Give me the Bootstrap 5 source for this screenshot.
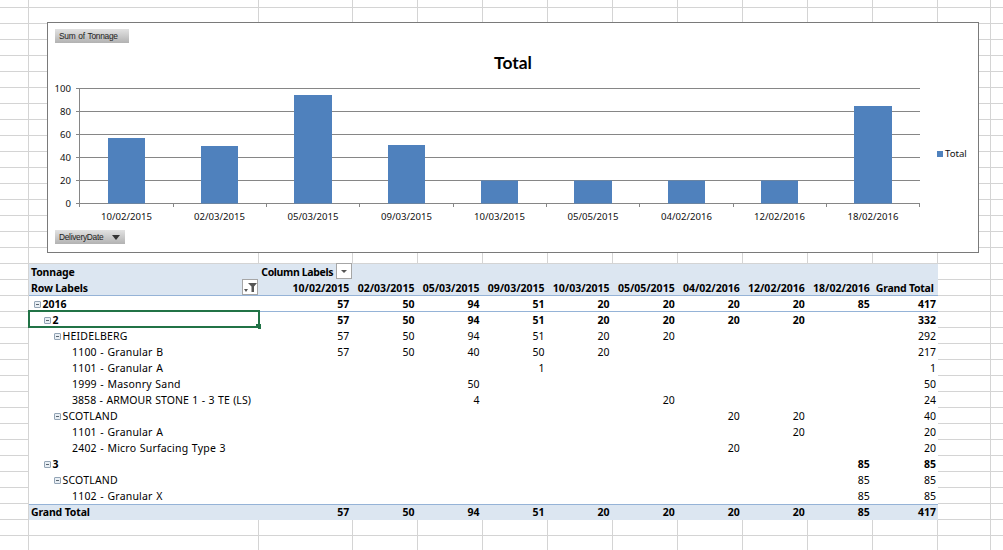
<!DOCTYPE html>
<html lang="en">
<head>
<meta charset="utf-8">
<title>Pivot chart</title>
<link href="https://cdn.jsdelivr.net/npm/bootstrap@5.3.0/dist/css/bootstrap.min.css" rel="stylesheet">
<style>
html,body{height:100%;margin:0;overflow:hidden;background:#fff}
.sheet{
  --gl:#d4d4d4;
  width:1003px;height:550px;overflow:hidden;color:#000;
  font-family:"Noto Sans","Liberation Sans",sans-serif;
  background-color:#fff;
  background-image:
    linear-gradient(var(--gl),var(--gl)),linear-gradient(var(--gl),var(--gl)),
    linear-gradient(var(--gl),var(--gl)),linear-gradient(var(--gl),var(--gl)),
    linear-gradient(var(--gl),var(--gl)),linear-gradient(var(--gl),var(--gl)),
    linear-gradient(var(--gl),var(--gl)),linear-gradient(var(--gl),var(--gl)),
    linear-gradient(var(--gl),var(--gl)),linear-gradient(var(--gl),var(--gl)),
    linear-gradient(var(--gl),var(--gl)),linear-gradient(var(--gl),var(--gl)),
    linear-gradient(var(--gl),var(--gl)),
    repeating-linear-gradient(180deg,var(--gl) 0,var(--gl) 1px,transparent 1px,transparent 16px);
  background-size:1px 100%,1px 100%,1px 100%,1px 100%,1px 100%,1px 100%,1px 100%,1px 100%,1px 100%,1px 100%,1px 100%,1px 100%,1px 100%,100% 100%;
  background-position:28px 0,258px 0,352px 0,417px 0,482px 0,547px 0,612px 0,677px 0,742px 0,807px 0,872px 0,937px 0,990px 0,0 7px;
  background-repeat:no-repeat;
  padding-top:22px;
}
.chartbox{position:relative;width:932px;height:231px;margin-left:47px;background:#fff;border:1px solid #7a7a7a}
.chartbox svg{display:block;width:930px;height:229px}
.chartbox text{font-family:"Noto Sans","Liberation Sans",sans-serif;font-size:9.6px;fill:#111}
.chartbox .ctitle{font-family:"Lato","Liberation Sans",sans-serif;font-size:17.4px;font-weight:700;fill:#000}
.fieldbtn{position:absolute;left:7px;display:flex;align-items:center;justify-content:space-between;height:14px;padding:0 0 0 4px;border:0;border-radius:0;
  background:linear-gradient(#e2e2e2,#b2b2b2);color:#222;font:8.4px/14px "Liberation Sans",sans-serif;letter-spacing:-.3px;word-spacing:1px}
.fb-sum{top:6px;width:74px}
.fb-date{top:207px;width:70px;padding-right:5px}
.fb-date i{width:0;height:0;border:4px solid transparent;border-top:5px solid #333;border-bottom:0}
.pivotwrap{margin:11px 0 0 29px;width:909px;position:relative}
.pivot{table-layout:fixed;width:909px;margin:0;border-collapse:collapse;--bs-table-bg:#fff;--bs-table-color:#000;font-size:10.5px}
.pivot td,.pivot th{height:16px;padding:0 3px 0 2px;line-height:16px;border:0;white-space:nowrap;text-align:right;font-weight:400;box-shadow:none;background:#fff;color:#000;overflow:visible}
.pivot tr>td:last-child{padding-right:2px}
.pivot .lbl{text-align:left;position:relative;letter-spacing:.2px;word-spacing:.6px}
.pivot tr.hdr>*{background:#dce6f1;font-weight:700}
.pivot tr.strong>*{font-weight:700}
.pivot tr.hdr>.lbl{letter-spacing:-.15px;word-spacing:0}
.pivot tr.strong>.lbl{letter-spacing:0;word-spacing:0}
.pivot tr.rule-b>*{box-shadow:inset 0 -1px 0 #95b3d7}
.pivot tr.rule-t>*{box-shadow:inset 0 1px 0 #95b3d7}
.pivot tr.hdr .cl{font-weight:700;text-align:left;position:relative;padding-left:3px;letter-spacing:-.35px}
.pivot tr.hdr>td.gt{text-align:left;padding-left:3px;letter-spacing:-.25px}
.pivot .lv0{padding-left:4.5px}.pivot .lv1{padding-left:14.5px}.pivot .lv2{padding-left:24.5px}.pivot .lv3{padding-left:43px}
.pivot .lbl.capsname{letter-spacing:.05px}
.tog{display:inline-block;width:7px;height:7px;margin-right:2px;vertical-align:0;border:1px solid #93a4b5;border-radius:1px;background:linear-gradient(#5a6670,#5a6670) center/3px 1px no-repeat,#e8eef4}
.ddbtn{position:absolute;width:16px;height:16px;top:-1px;right:0;background:#fff;border:1px solid #a6a6a6;padding:0;display:flex;align-items:center;justify-content:center}
.selcell{position:absolute;left:-1px;top:-2px;width:232px;height:18px;border:2px solid #217346;pointer-events:none}
.selcell::after{content:"";position:absolute;right:-3px;bottom:-3px;width:5px;height:5px;background:#217346}
</style>
</head>
<body>
<div class="sheet">
  <div class="chartbox">
    <button type="button" class="btn fieldbtn fb-sum">Sum of Tonnage</button>
    <svg viewBox="48 23 930 229" aria-label="Column chart">
      <g stroke="#868686" stroke-width="1" fill="none" shape-rendering="crispEdges">
        <path d="M76 88.5H920M76 111.5H920M76 134.5H920M76 157.5H920M76 180.5H920M76 203.5H920"/>
        <path d="M79.5 88V207M173.5 203V207M266.5 203V207M359.5 203V207M453.5 203V207M546.5 203V207M639.5 203V207M733.5 203V207M826.5 203V207M919.5 203V207"/>
      </g>
      <g fill="#4f81bd">
        <rect x="108" y="138" width="37" height="65.5"/>
        <rect x="201" y="146" width="37" height="57.5"/>
        <rect x="294" y="95" width="38" height="108.5"/>
        <rect x="388" y="145" width="37" height="58.5"/>
        <rect x="481" y="180.5" width="37" height="23"/>
        <rect x="574" y="180.5" width="38" height="23"/>
        <rect x="668" y="180.5" width="37" height="23"/>
        <rect x="761" y="180.5" width="37" height="23"/>
        <rect x="854" y="106" width="38" height="97.5"/>
        <rect x="937" y="151" width="6" height="6"/>
      </g>
      <text class="ctitle" x="513" y="69" text-anchor="middle">Total</text>
      <g text-anchor="end">
        <text x="71" y="92">100</text><text x="71" y="115">80</text><text x="71" y="138">60</text>
        <text x="71" y="161">40</text><text x="71" y="184">20</text><text x="71" y="207">0</text>
      </g>
      <g text-anchor="middle">
        <text x="126.500" y="220">10/02/2015</text><text x="219.500" y="220">02/03/2015</text>
        <text x="313" y="220">05/03/2015</text><text x="406.500" y="220">09/03/2015</text>
        <text x="499.500" y="220">10/03/2015</text><text x="593" y="220">05/05/2015</text>
        <text x="686.500" y="220">04/02/2016</text><text x="779.500" y="220">12/02/2016</text>
        <text x="873" y="220">18/02/2016</text>
      </g>
      <text x="945" y="157">Total</text>
    </svg>
    <button type="button" class="btn fieldbtn fb-date">DeliveryDate<i></i></button>
  </div>

  <div class="pivotwrap">
    <table class="table table-borderless pivot">
      <colgroup><col style="width:229px"><col style="width:94px"><col span="9" style="width:65px"></colgroup>
      <tbody>
        <tr class="hdr"><td class="lbl">Tonnage</td><td class="cl">Column Labels<span class="ddbtn"><svg width="8" height="4" viewBox="0 0 8 4"><path d="M1 1h6L4 4z" fill="#555"/></svg></span></td><td colspan="9"></td></tr>
        <tr class="hdr rule-b"><td class="lbl">Row Labels<span class="ddbtn"><svg width="13" height="11" viewBox="0 0 13 11"><path d="M4 1h9L10 4.500V10H7.500V4.500z" fill="#555"/><path d="M0 7h4L2 10z" fill="#555"/></svg></span></td><td>10/02/2015</td><td>02/03/2015</td><td>05/03/2015</td><td>09/03/2015</td><td>10/03/2015</td><td>05/05/2015</td><td>04/02/2016</td><td>12/02/2016</td><td>18/02/2016</td><td class="gt">Grand Total</td></tr>
        <tr class="strong rule-b"><td class="lbl lv0"><span class="tog"></span>2016</td><td>57</td><td>50</td><td>94</td><td>51</td><td>20</td><td>20</td><td>20</td><td>20</td><td>85</td><td>417</td></tr>
        <tr class="strong"><td class="lbl lv1"><span class="tog"></span>2<span class="selcell"></span></td><td>57</td><td>50</td><td>94</td><td>51</td><td>20</td><td>20</td><td>20</td><td>20</td><td></td><td>332</td></tr>
        <tr><td class="lbl lv2"><span class="tog"></span>HEIDELBERG</td><td>57</td><td>50</td><td>94</td><td>51</td><td>20</td><td>20</td><td></td><td></td><td></td><td>292</td></tr>
        <tr><td class="lbl lv3">1100 - Granular B</td><td>57</td><td>50</td><td>40</td><td>50</td><td>20</td><td></td><td></td><td></td><td></td><td>217</td></tr>
        <tr><td class="lbl lv3">1101 - Granular A</td><td></td><td></td><td></td><td>1</td><td></td><td></td><td></td><td></td><td></td><td>1</td></tr>
        <tr><td class="lbl lv3">1999 - Masonry Sand</td><td></td><td></td><td>50</td><td></td><td></td><td></td><td></td><td></td><td></td><td>50</td></tr>
        <tr><td class="lbl lv3 capsname">3858 - ARMOUR STONE 1 - 3 TE (LS)</td><td></td><td></td><td>4</td><td></td><td></td><td>20</td><td></td><td></td><td></td><td>24</td></tr>
        <tr><td class="lbl lv2"><span class="tog"></span>SCOTLAND</td><td></td><td></td><td></td><td></td><td></td><td></td><td>20</td><td>20</td><td></td><td>40</td></tr>
        <tr><td class="lbl lv3">1101 - Granular A</td><td></td><td></td><td></td><td></td><td></td><td></td><td></td><td>20</td><td></td><td>20</td></tr>
        <tr><td class="lbl lv3">2402 - Micro Surfacing Type 3</td><td></td><td></td><td></td><td></td><td></td><td></td><td>20</td><td></td><td></td><td>20</td></tr>
        <tr class="strong"><td class="lbl lv1"><span class="tog"></span>3</td><td></td><td></td><td></td><td></td><td></td><td></td><td></td><td></td><td>85</td><td>85</td></tr>
        <tr><td class="lbl lv2"><span class="tog"></span>SCOTLAND</td><td></td><td></td><td></td><td></td><td></td><td></td><td></td><td></td><td>85</td><td>85</td></tr>
        <tr><td class="lbl lv3">1102 - Granular X</td><td></td><td></td><td></td><td></td><td></td><td></td><td></td><td></td><td>85</td><td>85</td></tr>
        <tr class="hdr rule-t"><td class="lbl">Grand Total</td><td>57</td><td>50</td><td>94</td><td>51</td><td>20</td><td>20</td><td>20</td><td>20</td><td>85</td><td>417</td></tr>
      </tbody>
    </table>
  </div>
</div>
<script src="https://cdn.jsdelivr.net/npm/bootstrap@5.3.0/dist/js/bootstrap.bundle.min.js"></script>
</body>
</html>
